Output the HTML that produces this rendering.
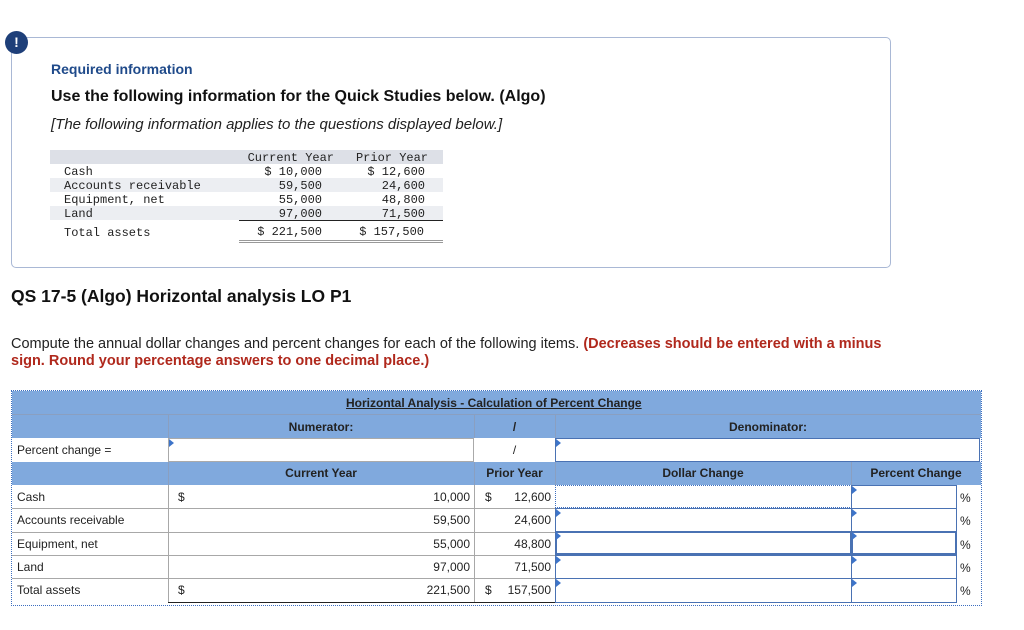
<!DOCTYPE html>
<html><head><meta charset="utf-8"><style>
*{margin:0;padding:0;box-sizing:border-box}
body{width:1024px;height:630px;background:#fff;font-family:"Liberation Sans",Arial,sans-serif;color:#222;position:relative;overflow:hidden}
.a{position:absolute}
.mono{font-family:"Liberation Mono",monospace;font-size:12px;color:#222;white-space:nowrap}
.blue{background:#80a9dd}
.c{text-align:center}
.b{font-weight:bold}
.inp{position:absolute;background:#fff;border:1px solid #4a72b3}
.fl{position:absolute;width:0;height:0;border-top:4px solid transparent;border-bottom:4px solid transparent;border-left:5px solid #3d74c9}
.t{font-size:12px;position:absolute;white-space:nowrap}
.hl{position:absolute;height:1px;background:#a8a8a8}
</style></head><body>
<div class="a" style="left:11px;top:37px;width:880px;height:231px;border:1px solid #a9b8d5;border-radius:5px"></div>
<div class="a" style="left:5px;top:31px;width:23px;height:23px;border-radius:50%;background:#1e3f79;color:#fff;font-weight:bold;font-size:14px;text-align:center;line-height:23px">!</div>
<div class="a b" style="left:51px;top:61px;font-size:14px;color:#1f4a8a">Required information</div>
<div class="a b" style="left:51px;top:88px;font-size:16px;color:#111;white-space:nowrap">Use the following information for the Quick Studies below. (Algo)</div>
<div class="a" style="left:51px;top:116px;font-size:15px;font-style:italic;color:#222;white-space:nowrap">[The following information applies to the questions displayed below.]</div>

<div class="a" style="left:50px;top:150px;width:393px;height:14px;background:#dde0e7"></div>
<div class="a" style="left:50px;top:178px;width:393px;height:14px;background:#eceef2"></div>
<div class="a" style="left:50px;top:206px;width:393px;height:14px;background:#eceef2"></div>
<div class="a" style="left:239px;top:220px;width:204px;height:1px;background:#222"></div>
<div class="a" style="left:239px;top:240px;width:204px;height:3px;border-top:1px solid #999;border-bottom:1px solid #999"></div>
<div class="a mono" style="left:64px;top:151px;line-height:14px">&nbsp;<br>Cash<br>Accounts receivable<br>Equipment, net<br>Land</div>
<div class="a mono" style="left:64px;top:226px">Total assets</div>
<div class="a mono" style="left:234px;top:151px;line-height:14px;text-align:right;width:100px">Current Year</div>
<div class="a mono" style="left:222px;top:165px;line-height:14px;text-align:right;width:100px">$ 10,000<br>59,500<br>55,000<br>97,000</div>
<div class="a mono" style="left:222px;top:225px;text-align:right;width:100px">$ 221,500</div>
<div class="a mono" style="left:328px;top:151px;line-height:14px;text-align:right;width:100px">Prior Year</div>
<div class="a mono" style="left:325px;top:165px;line-height:14px;text-align:right;width:100px">$ 12,600<br>24,600<br>48,800<br>71,500</div>
<div class="a mono" style="left:324px;top:225px;text-align:right;width:100px">$ 157,500</div>

<div class="a b" style="left:11px;top:286px;font-size:17.5px;color:#111">QS 17-5 (Algo) Horizontal analysis LO P1</div>
<div class="a" style="left:11px;top:336px;font-size:14.5px;line-height:17px;width:882px">Compute the annual dollar changes and percent changes for each of the following items. <b style="color:#b0281c">(Decreases should be entered with a minus sign. Round your percentage answers to one decimal place.)</b></div>

<div class="a" style="left:11px;top:390px;width:971px;height:216px;border:1px dotted #3d6fc0"></div>
<div class="a blue" style="left:12px;top:391px;width:969px;height:47px"></div>
<div class="a blue" style="left:12px;top:462px;width:969px;height:23px"></div>
<div class="hl" style="left:12px;top:414px;width:969px;background:#8a9fc0"></div>
<div class="a" style="left:168px;top:414px;width:1px;height:24px;background:#8a9fc0"></div>
<div class="a" style="left:474px;top:414px;width:1px;height:24px;background:#8a9fc0"></div>
<div class="a" style="left:555px;top:414px;width:1px;height:24px;background:#8a9fc0"></div>
<div class="a" style="left:168px;top:462px;width:1px;height:23px;background:#8a9fc0"></div>
<div class="a" style="left:474px;top:462px;width:1px;height:23px;background:#8a9fc0"></div>
<div class="a" style="left:555px;top:462px;width:1px;height:23px;background:#8a9fc0"></div>
<div class="a" style="left:851px;top:462px;width:1px;height:23px;background:#8a9fc0"></div>
<div class="t b" style="left:346px;top:396px;text-decoration:underline">Horizontal Analysis - Calculation of Percent Change</div>
<div class="t b c" style="left:168px;top:420px;width:306px">Numerator:</div>
<div class="t b c" style="left:474px;top:420px;width:81px">/</div>
<div class="t b c" style="left:555px;top:420px;width:426px">Denominator:</div>
<div class="t" style="left:17px;top:443px">Percent change =</div>
<div class="inp" style="left:168px;top:438px;width:306px;height:24px;border-color:#aaa"></div>
<div class="t c" style="left:474px;top:443px;width:81px">/</div>
<div class="inp" style="left:555px;top:438px;width:425px;height:24px"></div>
<div class="fl" style="left:169px;top:439px"></div><div class="fl" style="left:556px;top:439px"></div>
<div class="t b c" style="left:168px;top:466px;width:306px">Current Year</div>
<div class="t b c" style="left:474px;top:466px;width:81px">Prior Year</div>
<div class="t b c" style="left:555px;top:466px;width:296px">Dollar Change</div>
<div class="t b c" style="left:851px;top:466px;width:130px">Percent Change</div>

<div class="hl" style="left:12px;top:508px;width:544px"></div>
<div class="hl" style="left:12px;top:532px;width:544px"></div>
<div class="hl" style="left:12px;top:555px;width:544px"></div>
<div class="hl" style="left:12px;top:578px;width:544px"></div>
<div class="hl" style="left:168px;top:602px;width:388px;background:#222"></div>
<div class="a" style="left:168px;top:485px;width:1px;height:117px;background:#a8a8a8"></div>
<div class="a" style="left:474px;top:485px;width:1px;height:117px;background:#a8a8a8"></div>
<div class="a" style="left:956px;top:485px;width:1px;height:117px;background:#a8a8a8"></div>

<div class="t" style="left:17px;top:490px">Cash</div>
<div class="t" style="left:17px;top:513px">Accounts receivable</div>
<div class="t" style="left:17px;top:537px">Equipment, net</div>
<div class="t" style="left:17px;top:560px">Land</div>
<div class="t" style="left:17px;top:583px">Total assets</div>
<div class="t" style="left:178px;top:490px">$</div>
<div class="t" style="left:178px;top:583px">$</div>
<div class="t" style="left:400px;top:490px;width:70px;text-align:right">10,000</div>
<div class="t" style="left:400px;top:513px;width:70px;text-align:right">59,500</div>
<div class="t" style="left:400px;top:537px;width:70px;text-align:right">55,000</div>
<div class="t" style="left:400px;top:560px;width:70px;text-align:right">97,000</div>
<div class="t" style="left:400px;top:583px;width:70px;text-align:right">221,500</div>
<div class="t" style="left:485px;top:490px">$</div>
<div class="t" style="left:485px;top:583px">$</div>
<div class="t" style="left:490px;top:490px;width:61px;text-align:right">12,600</div>
<div class="t" style="left:490px;top:513px;width:61px;text-align:right">24,600</div>
<div class="t" style="left:490px;top:537px;width:61px;text-align:right">48,800</div>
<div class="t" style="left:490px;top:560px;width:61px;text-align:right">71,500</div>
<div class="t" style="left:490px;top:583px;width:61px;text-align:right">157,500</div>

<div class="a" style="left:555px;top:485px;width:297px;height:23px;border:1px dotted #3d6fc0"></div>
<div class="inp" style="left:555px;top:508px;width:297px;height:24px"></div>
<div class="inp" style="left:555px;top:531px;width:297px;height:24px;border-width:2px"></div>
<div class="inp" style="left:555px;top:555px;width:297px;height:24px"></div>
<div class="inp" style="left:555px;top:578px;width:297px;height:25px"></div>
<div class="inp" style="left:851px;top:485px;width:106px;height:24px"></div>
<div class="inp" style="left:851px;top:508px;width:106px;height:24px"></div>
<div class="inp" style="left:851px;top:531px;width:106px;height:24px;border-width:2px"></div>
<div class="inp" style="left:851px;top:555px;width:106px;height:24px"></div>
<div class="inp" style="left:851px;top:578px;width:106px;height:25px"></div>
<div class="fl" style="left:556px;top:509px"></div><div class="fl" style="left:556px;top:532px"></div><div class="fl" style="left:556px;top:556px"></div><div class="fl" style="left:556px;top:579px"></div>
<div class="fl" style="left:852px;top:486px"></div><div class="fl" style="left:852px;top:509px"></div><div class="fl" style="left:852px;top:532px"></div><div class="fl" style="left:852px;top:556px"></div><div class="fl" style="left:852px;top:579px"></div>
<div class="t" style="left:960px;top:491px">%</div>
<div class="t" style="left:960px;top:514px">%</div>
<div class="t" style="left:960px;top:538px">%</div>
<div class="t" style="left:960px;top:561px">%</div>
<div class="t" style="left:960px;top:584px">%</div>
</body></html>
